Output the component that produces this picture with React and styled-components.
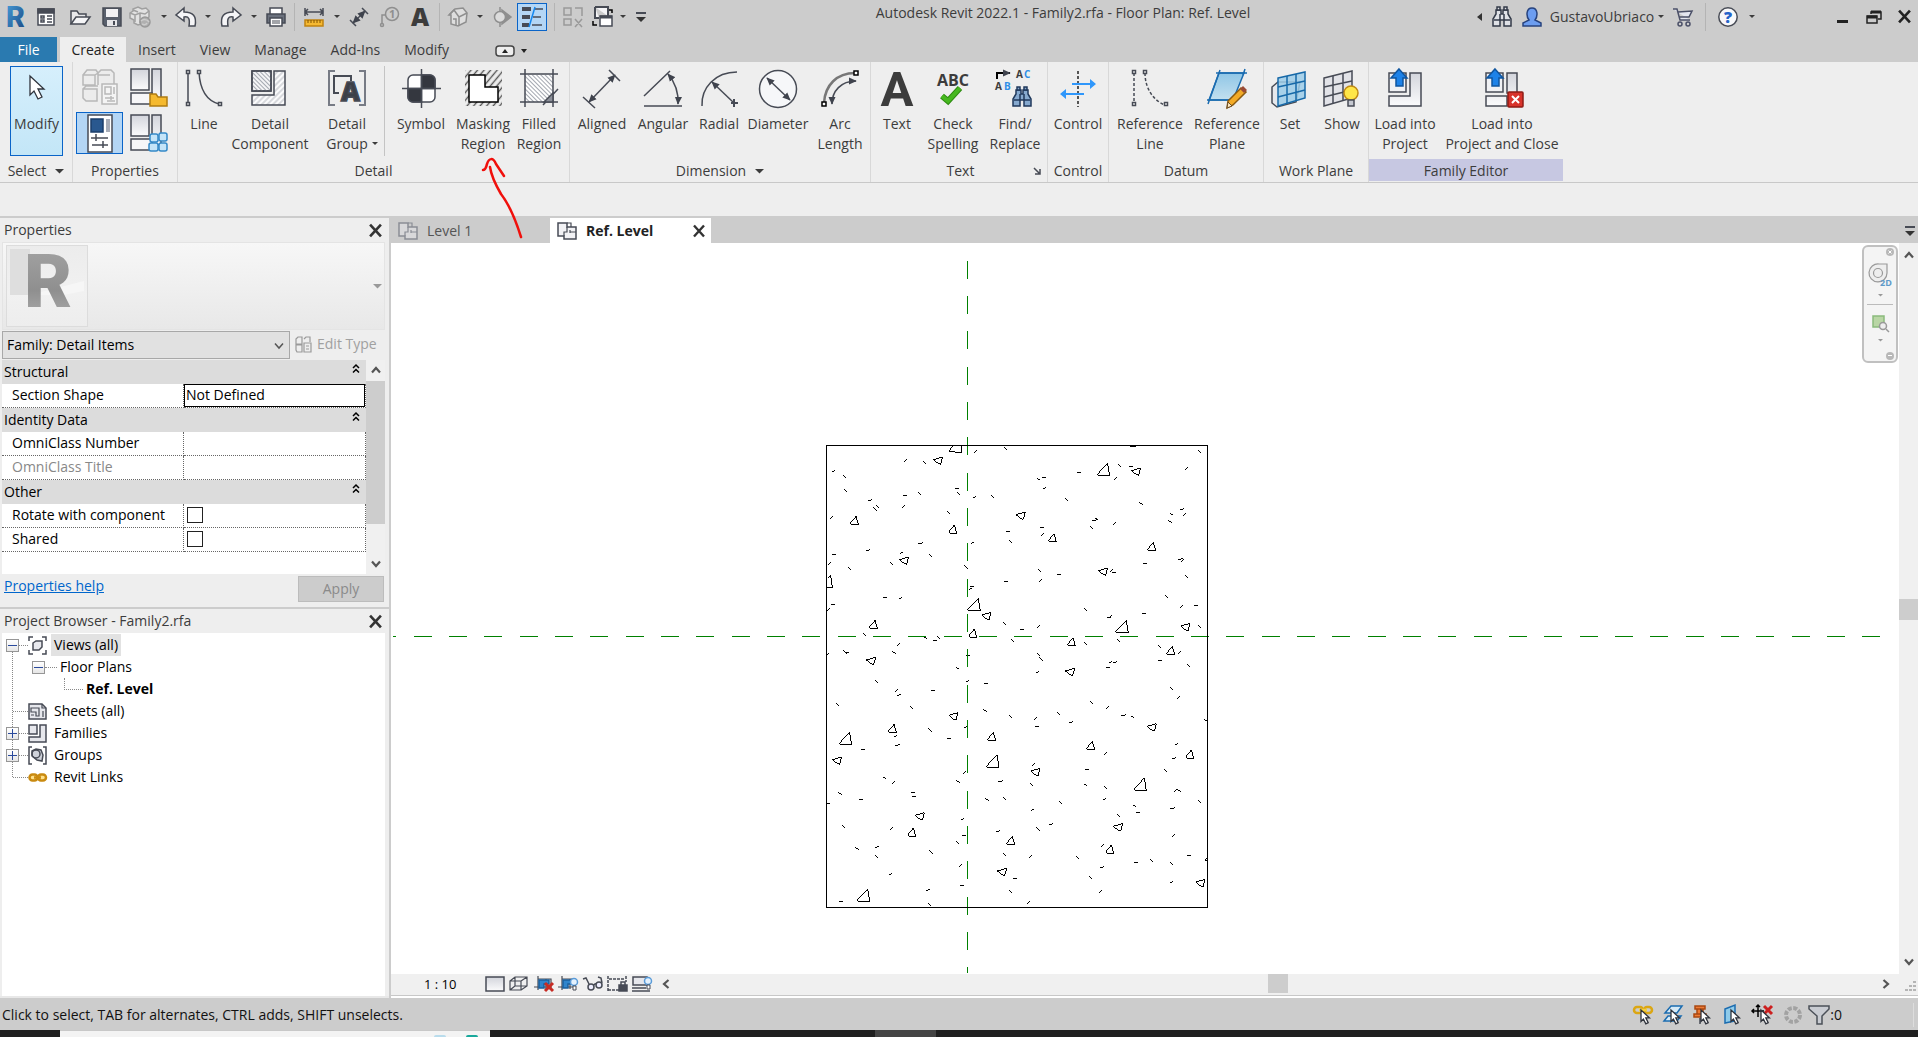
import React from 'react';
import styled, { createGlobalStyle } from 'styled-components';

const GlobalStyle = createGlobalStyle`
  * {
    box-sizing: border-box;
  }

  body {
    margin: 0;
    overflow: hidden;
    background: #eeeeee;
    color: #3c3c3c;
    font-family: 'Open Sans', 'Noto Sans', sans-serif;
    font-size: 14px;
    line-height: 20px;
  }

  button, input, select {
    font: inherit;
    color: inherit;
  }

  svg {
    display: block;
    flex: none;
    overflow: visible;
  }
`;

const Window = styled.div`
  position: relative;
  display: flex;
  flex-direction: column;
  height: 100vh;
`;

const PlainButton = styled.button`
  display: flex;
  align-items: center;
  justify-content: center;
  padding: 0;
  border: 0;
  background: transparent;
  white-space: nowrap;
`;

/* title bar */

const TitleBar = styled.header`
  display: flex;
  flex: none;
  height: 37px;
  padding-bottom: 4px;
  background: #cccccc;
`;

const QuickAccess = styled.div`
  display: flex;
  align-items: center;
`;

const QuickButton = styled(PlainButton)`
  width: ${(p) => p.$w}px;
  height: 28px;
`;

const QuickToggle = styled(PlainButton)`
  width: 30px;
  height: 28px;
  margin: 0 3px;
  border: 1px solid #0a64c8;
  background: #b4d6f5;
`;

const QuickDivider = styled.span`
  width: 1px;
  height: 28px;
  margin: 0 ${(p) => p.$gap}px;
  background: #b4b4b4;
`;

const Title = styled.h1`
  flex: 1;
  margin: 0;
  font-size: 14px;
  font-weight: 400;
  line-height: 26px;
  text-align: center;
`;

const UserName = styled(PlainButton)`
  gap: 4px;
  width: 120px;
`;

/* ribbon */

const TabBar = styled.nav`
  display: flex;
  flex: none;
  height: 25px;
  background: #cccccc;
`;

const Tab = styled(PlainButton)`
  padding: 0 12px;
  color: #3c3c3c;
`;

const FileTab = styled(PlainButton)`
  width: 57px;
  margin-right: 3px;
  background: #2a7ab0;
  color: #fff;
`;

const ActiveTab = styled(PlainButton)`
  width: 66px;
  background: #eeeeee;
  color: #222;
`;

const RibbonArea = styled.div`
  display: flex;
  flex: none;
  height: 121px;
  border-bottom: 1px solid #c8c8c8;
  background: #eeeeee;
`;

const PanelBox = styled.section`
  display: flex;
  flex-direction: column;
  padding-bottom: 1px;
  border-right: 1px solid ${(p) => (p.$last ? 'transparent' : '#d8d8d8')};
`;

const PanelBody = styled.div`
  display: flex;
  height: 97px;
  padding-top: 4px;
`;

const PanelTitle = styled.div`
  display: flex;
  align-items: center;
  justify-content: center;
  gap: 9px;
  height: 22px;
  padding-top: 2px;
  background: ${(p) => (p.$highlight ? '#c7c8e2' : 'transparent')};
`;

const Launcher = styled(PlainButton)`
  margin-right: -70px;
  margin-left: 50px;
`;

const ToolButton = styled(PlainButton)`
  flex-direction: column;
  justify-content: flex-start;
  gap: 6px;
  width: ${(p) => p.$w}px;
  height: 90px;
  padding-top: 2px;
`;

const ModifyButton = styled(ToolButton)`
  margin: 0 9px 0 10px;
  padding-top: 1px;
  border: 1px solid #0a64c8;
  background: linear-gradient(#d6effc, #c3e6f7);
`;

const ToolLabel = styled.span`
  position: relative;
  white-space: pre;
  text-align: center;
`;

const MenuMark = styled.span`
  position: absolute;
  right: -10px;
  bottom: 9px;
`;

const ToolDivider = styled.span`
  width: 1px;
  height: 90px;
  background: #c4c4c4;
`;

const SmallTools = styled.div`
  display: grid;
  grid-template-columns: 47px 47px;
  grid-template-rows: 42px 42px;
  gap: 4px 2px;
  padding: 0 5px 0 3px;
`;

const SmallTool = styled(PlainButton)`
  border: 1px solid ${(p) => (p.$on ? '#0a64c8' : 'transparent')};
  background: ${(p) => (p.$on ? '#b4d6f5' : 'transparent')};
`;

const OptionsBar = styled.div`
  flex: none;
  height: 35px;
  border-bottom: 2px solid #cccccc;
`;

/* side panels */

const Workspace = styled.div`
  display: flex;
  flex: 1;
  min-height: 0;
`;

const Sidebar = styled.aside`
  display: flex;
  flex: none;
  flex-direction: column;
  width: 391px;
  border-right: 2px solid #cccccc;
`;

const Palette = styled.section`
  padding: 0 4px 0 2px;
`;

const PaletteHeader = styled.header`
  display: flex;
  align-items: center;
  justify-content: space-between;
  height: 24px;
  padding: 0 3px 0 2px;
`;

const PaletteTitle = styled.h2`
  margin: 0;
  font-size: 14px;
  font-weight: 400;
`;

const TypePreview = styled.div`
  display: flex;
  align-items: center;
  justify-content: space-between;
  height: 88px;
  padding: 3px 2px;
  border: 1px solid #e4e4e4;
  background: linear-gradient(#f7f7f7, #e8e8e8);
`;

const Thumb = styled.div`
  width: 82px;
  height: 82px;
  margin-left: 1px;
  border: 1px solid #dcdcdc;
  background: linear-gradient(#ececec, #f1f1f1 60%, #ededed);
`;

const TypeRow = styled.div`
  display: flex;
  align-items: center;
  gap: 5px;
  height: 30px;
`;

const SelectWrap = styled.div`
  position: relative;
  width: 288px;
`;

const TypeSelect = styled.select`
  width: 100%;
  height: 28px;
  padding: 0 4px;
  border: 1px solid #a8a8a8;
  border-radius: 0;
  appearance: none;
  background: #e1e1e1;
  color: #000;
`;

const SelectMark = styled.span`
  position: absolute;
  top: 10px;
  right: 6px;
  pointer-events: none;
`;

const EditType = styled(PlainButton)`
  gap: 5px;
  height: 28px;
  padding-bottom: 2px;
  color: #a0a0a0;
`;

const GridArea = styled.div`
  display: flex;
  height: 214px;
  background: #fff;
`;

const PropertyTable = styled.table`
  flex: 1;
  height: 192px;
  border-spacing: 0;
  table-layout: fixed;
  color: #000;
`;

const GroupHead = styled.th`
  height: 24px;
  padding: 0 6px 0 2px;
  background: #dcdcdc;
  font-weight: 400;
  text-align: left;
`;

const GroupHeadInner = styled.div`
  display: flex;
  align-items: center;
  justify-content: space-between;
  height: 24px;
`;

const NameCell = styled.td`
  width: 50%;
  height: 24px;
  padding: 0 0 2px 10px;
  border-right: 1px dotted #666;
  border-bottom: 1px dotted #666;
  color: ${(p) => (p.$muted ? '#888' : '#000')};
  line-height: 20px;
`;

const ValueCell = styled.td`
  padding: 0 0 ${(p) => (p.$check ? '2px 3px' : '0 0')};
  border-right: 1px dotted #666;
  border-bottom: 1px dotted #666;
`;

const ValueInput = styled.input`
  display: block;
  width: 100%;
  height: 23px;
  padding: 0 1px 2px;
  border: 1px solid ${(p) => (p.$focused ? '#000' : 'transparent')};
  background: transparent;
`;

const Check = styled.input`
  display: block;
  width: 16px;
  height: 16px;
  margin: 0;
  border: 1px solid #222;
  appearance: none;
  background: #fff;
`;

const ScrollBar = styled.div`
  display: flex;
  flex: none;
  flex-direction: column;
  align-items: center;
  width: 19px;
  padding: ${(p) => p.$pad}px 0;
  background: #f0f0f0;
`;

const ScrollTrack = styled.div`
  display: flex;
  flex: 1;
  flex-direction: column;
  width: 100%;
`;

const ScrollThumb = styled.div`
  flex: ${(p) => p.$size};
  background: #cdcdcd;
`;

const ScrollSpace = styled.div`
  flex: ${(p) => p.$size};
`;

const PaletteFooter = styled.footer`
  display: flex;
  justify-content: space-between;
  height: 33px;
  padding: 2px 0 5px 2px;
`;

const HelpLink = styled.a`
  color: #0066cc;
`;

const ApplyButton = styled.button`
  width: 86px;
  height: 26px;
  margin-right: 1px;
  padding: 0;
  border: 1px solid #bcbcbc;
  background: #cccccc;
  color: #8a8a8a;
`;

const Browser = styled(Palette)`
  display: flex;
  flex: 1;
  flex-direction: column;
  border-top: 2px solid #cccccc;
  border-bottom: 2px solid #e8e8e8;
`;

const Tree = styled.ul`
  position: relative;
  flex: 1;
  margin: 0;
  padding: 1px 0 0 4px;
  background: #fff;
  color: #000;
  list-style: none;

  &::before {
    content: '';
    position: absolute;
    top: 18px;
    left: 10px;
    height: 126px;
    border-left: 1px dotted #888;
  }
`;

const TreeRow = styled.li`
  position: relative;
  display: flex;
  align-items: center;
  height: 22px;
  padding-left: ${(p) => p.$indent}px;
`;

const Expander = styled.button`
  display: flex;
  align-items: center;
  justify-content: center;
  width: 13px;
  height: 13px;
  padding: 0;
  border: 1px solid #969696;
  background: linear-gradient(#fff, #e6e6e6);
`;

const Connector = styled.span`
  width: ${(p) => p.$w}px;
  border-top: 1px dotted #888;
`;

const CornerConnector = styled.span`
  align-self: flex-start;
  width: 19px;
  height: 12px;
  border-bottom: 1px dotted #888;
  border-left: 1px dotted #888;
`;

const TreeLabel = styled.span`
  margin-left: ${(p) => (p.$near ? 0 : 4)}px;
  padding: 0 3px;
  line-height: 22px;
  background: ${(p) => (p.$selected ? '#e2e2e2' : 'transparent')};
  font-weight: ${(p) => (p.$bold ? 700 : 400)};
`;

/* drawing area */

const ViewArea = styled.main`
  display: flex;
  flex: 1;
  flex-direction: column;
  min-width: 0;
  border-bottom: 2px solid #fff;
`;

const ViewTabs = styled.div`
  display: flex;
  align-items: stretch;
  flex: none;
  height: 25px;
  background: #cccccc;
`;

const ViewTab = styled.div`
  display: flex;
  align-items: center;
  gap: 9px;
  width: ${(p) => (p.$active ? 161 : 159)}px;
  padding: 0 6px 0 7px;
  background: ${(p) => (p.$active ? '#fff' : 'transparent')};
  color: ${(p) => (p.$active ? '#222' : '#555')};
  font-weight: ${(p) => (p.$active ? 700 : 400)};

  button {
    margin-left: auto;
  }
`;

const TabMenu = styled(PlainButton)`
  margin-right: 2px;
  margin-left: auto;
`;

const CanvasRow = styled.div`
  display: flex;
  flex: 1;
  min-height: 0;
`;

const Canvas = styled.div`
  position: relative;
  flex: 1;
  overflow: hidden;
  background: #fff;

  > svg {
    width: 100%;
    height: 100%;
  }
`;

const NavBar = styled.div`
  position: absolute;
  top: 2px;
  right: 1px;
  display: flex;
  flex-direction: column;
  align-items: center;
  width: 36px;
  height: 118px;
  padding: 1px 2px;
  border: 2px solid #c0c0c0;
  border-radius: 6px;
  background: #f4f4f4;
`;

const NavEdge = styled(PlainButton)`
  align-self: flex-end;
`;

const NavTool = styled(PlainButton)`
  flex: 1;
  flex-direction: column;
  gap: 7px;
`;

const NavLine = styled.span`
  width: 26px;
  height: 1px;
  background: #bbb;
`;

const ViewBar = styled.div`
  display: flex;
  align-items: center;
  flex: none;
  height: 22px;
  padding: 0 0 2px 33px;
  border-bottom: 1px solid #c8c8c8;
  background: #f0f0f0;
  color: #000;
`;

const ScaleButton = styled(PlainButton)`
  width: 59px;
  justify-content: flex-start;
  font-size: 13px;
`;

const ViewTool = styled(PlainButton)`
  width: 24px;
  margin-right: ${(p) => (p.$gap ? 1 : 0)}px;
`;

const HTrack = styled.div`
  display: flex;
  flex: 1;
  align-self: stretch;
`;

const Grip = styled.span`
  align-self: flex-end;
  margin: 0 2px 1px 13px;
`;

/* bottom bars */

const StatusBar = styled.footer`
  display: flex;
  align-items: center;
  justify-content: space-between;
  flex: none;
  height: 32px;
  padding: 2px 0 0 2px;
  background: #cccccc;
  color: #111;
`;

const StatusTools = styled.div`
  display: flex;
  align-items: center;
  margin-right: 4px;
  padding-right: 71px;
  border-right: 1px solid #ddd;
`;

const StatusTool = styled(PlainButton)`
  width: 30px;
  height: 24px;
`;

const TaskBar = styled.div`
  display: flex;
  flex: none;
  height: 7px;
  background: #1f1f1f;
`;

const TaskSearch = styled.div`
  display: flex;
  gap: 20px;
  width: 430px;
  margin-left: 60px;
  padding: 4px 12px 0 0;
  justify-content: flex-end;
  border-top: 1px solid #c8c8c8;
  background: #f3f3f3;
`;

const TaskDot = styled.span`
  width: 12px;
  height: 2px;
  border-radius: 6px 6px 0 0;
  background: ${(p) => p.$color};
`;

const TaskActive = styled.div`
  width: 61px;
  margin-left: 385px;
  background: #444;
`;

const Markup = styled.svg`
  position: absolute;
  top: 156px;
  left: 480px;
  pointer-events: none;
`;

const INK = '#474b55';

/* small shared glyphs */

const Icon = ({ w = 40, h = w, box, children, ...rest }) => (
  <svg width={w} height={h} viewBox={box || `0 0 ${w} ${h}`} fill="none" stroke={INK} strokeWidth="1.5" aria-hidden="true" {...rest}>
    {children}
  </svg>
);

const Down = ({ w = 8, color = '#3c3c3c' }) => (
  <Icon w={w} h={w / 2} box="0 0 8 4" stroke="none">
    <path d="M0 0h8l-4 4z" fill={color} />
  </Icon>
);

const Cross = ({ size = 12, color = '#333', weight = 2.4 }) => (
  <Icon w={size} box="0 0 12 12" stroke={color} strokeWidth={weight}>
    <path d="M1 0.500 11 11.500M11 0.500 1 11.500" />
  </Icon>
);

const Chevron = ({ dir, size = 10, color = '#555', weight = 2.2 }) => {
  const paths = {
    up: 'M1 7.500 5 3l4 4.500',
    down: 'M1 2.500 5 7l4-4.500',
    left: 'M7.500 1 3 5l4.500 4',
    right: 'M2.500 1 7 5l-4.500 4',
  };
  return (
    <Icon w={size} box="0 0 10 10" stroke={color} strokeWidth={weight}>
      <path d={paths[dir]} />
    </Icon>
  );
};

const SharedDefs = () => (
  <svg width="0" height="0" style={{ position: 'absolute' }} aria-hidden="true">
    <defs>
      <marker id="arrow" viewBox="0 0 10 10" refX="9" refY="5" markerWidth="8" markerHeight="8" markerUnits="userSpaceOnUse" orient="auto-start-reverse">
        <path d="M0 0.500 10 5 0 9.500z" fill="#3f434d" />
      </marker>
      <pattern id="hatch" width="3" height="3" patternUnits="userSpaceOnUse" patternTransform="rotate(-45)">
        <path d="M1.500 0v3" stroke="#a3a7b0" strokeWidth="1" />
      </pattern>
      <pattern id="hatchBack" width="4" height="4" patternUnits="userSpaceOnUse" patternTransform="rotate(45)">
        <path d="M2 0v4" stroke="#b3b6bd" strokeWidth="1" />
      </pattern>
      <pattern id="hatchWide" width="5" height="5" patternUnits="userSpaceOnUse" patternTransform="rotate(40)">
        <path d="M2.500 0v5" stroke="#555" strokeWidth="1.400" />
      </pattern>
      <linearGradient id="steel" x1="0" y1="0" x2="0" y2="1">
        <stop offset="0" stopColor="#d3d5dc" />
        <stop offset="1" stopColor="#fbfbfc" />
      </linearGradient>
      <linearGradient id="sky" x1="0" y1="0" x2="0" y2="1">
        <stop offset="0" stopColor="#8fc6e6" />
        <stop offset="1" stopColor="#c3e0ef" />
      </linearGradient>
      <linearGradient id="logo" x1="0" y1="0" x2="1" y2="1">
        <stop offset="0" stopColor="#49a0dc" />
        <stop offset="1" stopColor="#17447f" />
      </linearGradient>
      <linearGradient id="grayLogo" x1="0" y1="0" x2="0" y2="1">
        <stop offset="0" stopColor="#a6a6a6" />
        <stop offset="0.600" stopColor="#8f8f8f" />
        <stop offset="1" stopColor="#b0b0b0" />
      </linearGradient>
    </defs>
  </svg>
);

const Pointer = ({ x = 0, y = 0, scale = 1 }) => (
  <path
    transform={`translate(${x} ${y}) scale(${scale})`}
    d="M0 0v19l4-4 4 8 4-2-4-8h6z"
    fill="#fff"
    stroke="#2f333c"
    strokeWidth={1.3 / scale}
  />
);

const Binoculars = ({ fill = '#dfe1e6', stroke = '#333a48' }) => (
  <g fill={fill} stroke={stroke} strokeWidth="1.500">
    <path d="M4 4h5v4h2V4h5v4l3 5v7h-7v-6h-4v6H1v-7l3-5z" />
    <path d="M5 1h3v3H5zM12 1h3v3h-3zM2 14h6M12 14h6M8 8v6M12 8v6" />
  </g>
);

/* quick access icons, 22px */

const Quick = ({ children, ...rest }) => <Icon w={22} {...rest}>{children}</Icon>;

const QuickIcons = {
  logo: (
    <Icon w={22} h={26} stroke="none">
      <text x="1" y="23" fontFamily="Roboto" fontSize="29" fontWeight="900" fill="url(#logo)">R</text>
    </Icon>
  ),
  home: (
    <Quick>
      <path d="M3 3h16v16H3z" fill="#fff" />
      <path d="M3 3h16v4H3z" fill={INK} />
      <path d="M6 10h3v2H6zM6 14h3v2H6zM12 10h5M12 13h5M12 16h5" />
    </Quick>
  ),
  open: (
    <Quick>
      <path d="M2 18V5h6l2 3h7v3" fill="#e8e8ea" />
      <path d="M2 18 7 11h14l-5 7z" fill="#f5f5f7" />
    </Quick>
  ),
  save: (
    <Quick>
      <path d="M2 2h18v18H4l-2-2z" fill="#59606d" />
      <path d="M5 3h12v8H5z" fill="#f2f2f5" stroke="none" />
      <path d="M6 14h10v6H6z" fill="#e5e5e8" stroke="none" />
      <path d="M12 15h2v4h-2z" fill={INK} stroke="none" />
    </Quick>
  ),
  sync: (
    <Quick stroke="#a0a0a0">
      <path d="m1 7 3-2V3l5-2 4 2 4-1 3 3v6l-8 7-3 1-4-2v-3l-4-2z" fill="#e2e2e2" />
      <path d="m1 7 5 2 5-2 5 1 4-3M6 9v7M11 7v10M4 4l5 2" />
      <circle cx="16" cy="16" r="5" fill="#b0b0b0" stroke="#999" />
      <path d="M12 15c2-2 6-2 8 1M13 18c2 1 4 1 5-1" stroke="#ccc" />
    </Quick>
  ),
  undo: (
    <Quick>
      <path d="M9 2 1 9l8 6v-4c5-1 6 2 5 9h6C22 10 18 6 9 6z" fill="#f5f5f7" />
    </Quick>
  ),
  redo: (
    <Quick>
      <path d="m13 2 8 7-8 6v-4c-5-1-6 2-5 9H2C0 10 4 6 13 6z" fill="#f5f5f7" />
    </Quick>
  ),
  print: (
    <Quick>
      <path d="M5 8V2h12v6" fill="#fff" />
      <path d="M2 8h18v9H2z" fill="#6b717d" />
      <path d="M5 12h12v8H5z" fill="#fff" />
      <path d="M7 15h8M7 17h8" strokeWidth="1" />
    </Quick>
  ),
  measure: (
    <Quick>
      <path d="M2 6h18M5 3 2 6l3 3M17 3l3 3-3 3M2 2v8M20 2v8" />
      <path d="M2 14h18v6H2z" fill="#f6b932" stroke="#c08310" />
      <path d="M5 14v3M8 14v3M11 14v3M14 14v3M17 14v3" stroke="#805500" strokeWidth="1" />
    </Quick>
  ),
  dimension: (
    <Quick>
      <path d="M5 17 17 5" markerStart="url(#arrow)" markerEnd="url(#arrow)" />
      <path d="m2 14 6 6M14 2l6 6" />
    </Quick>
  ),
  tag: (
    <Quick stroke="#8f8f8f">
      <circle cx="14" cy="8" r="6.500" />
      <path d="M8 9H4v8" />
      <circle cx="4" cy="19" r="1.500" />
      <text x="11" y="12" fontFamily="Open Sans" fontSize="11" fontWeight="700" fill="#8f8f8f" stroke="none">1</text>
    </Quick>
  ),
  text: (
    <Quick stroke="none">
      <text x="3" y="20" fontFamily="Open Sans" fontSize="25" fontWeight="800" fill="#3c3c3c">A</text>
    </Quick>
  ),
  house: (
    <Quick stroke="#8f8f8f">
      <path d="m2 9 6-6 8-1 4 5-1 9-8 4-7-2V9z" fill="#dedede" />
      <path d="m2 9 5-5 5 7 8-4M12 11v9M6 13h3v6" />
    </Quick>
  ),
  section: (
    <Quick stroke="#8f8f8f">
      <path d="m11 4 9 7-9 7z" fill="#8f8f8f" />
      <circle cx="9" cy="11" r="5.500" fill="#dcdcdc" />
      <path d="M9 1v4M9 17v4" />
    </Quick>
  ),
  thin: (
    <Quick w={24} h={22}>
      <path d="M2 3h9M2 11h8M2 19h7" strokeWidth="4" />
      <path d="M14 3h9M13 11h8M12 19h10" strokeWidth="1.500" />
      <path d="m15 1-6 20" stroke="#1287f0" />
    </Quick>
  ),
  closeHidden: (
    <Quick stroke="#999">
      <path d="M2 2h7v7H2zM13 2h7v8M2 13h7v6H2zM13 13l7 8M20 13l-7 8" />
    </Quick>
  ),
  switchWin: (
    <Quick>
      <path d="M3 1h13v9M3 1v11h4" fill="#f5f5f7" strokeWidth="2" />
      <path d="M8 10h12v10H8z" fill="#fff" />
      <path d="M8 11h12" strokeWidth="3" />
      <path d="M17 4h3v3M1 15v4h4" stroke="#000" />
    </Quick>
  ),
  customize: (
    <Icon w={12} h={12}>
      <path d="M1 2h10" strokeWidth="2" />
      <path d="M1 6h10l-5 5z" fill="#333" stroke="none" />
    </Icon>
  ),
};

/* ribbon icons, 40px */

const ELL = 'M24 3h11v34H2V27h22z';

const Pane = () => (
  <>
    <path d="M2 2h18v21H2z" fill="url(#steel)" />
    <path d="M23 2h9v30h-9z" fill="url(#steel)" />
    <path d="M2 26h21v11H2z" fill="#f6f6f8" />
  </>
);

const RibbonIcons = {
  typeProps: (
    <Icon stroke="#b8b8b8">
      <path d="m3 8 4-5h9l2 3 3-3h10l3 3v12h-3M3 8h12v10H3zM18 6v12M15 8l3-2M18 8h12M3 22h14v12H6l-3-3zM3 22l3-3h12" fill="#ececec" />
      <path d="M22 17h15v20H22z" fill="#f4f4f4" />
      <path d="M25 20h6v7h-6zM34 20v7M25 31h9M27 34h8M31 29v4" />
    </Icon>
  ),
  familyCategory: (
    <Icon>
      <Pane />
      <path d="M21 27h6l2 3h9v9H21z" fill="#f5b92e" stroke="#b07c12" />
    </Icon>
  ),
  properties: (
    <Icon>
      <path d="M8 2h24v37H8z" fill="#fff" />
      <path d="M11 6h12v13H11z" fill="#29588f" stroke="#1b3e6b" />
      <path d="M26 6h4v13h-4z" fill="#a8adb8" stroke="none" />
      <path d="M11 25h17M16 21v7M12 32h16M23 28v7" />
    </Icon>
  ),
  familyTypes: (
    <Icon>
      <Pane />
      <g fill="#c4e4f8" stroke="#3489c8">
        <rect x="21" y="21" width="8" height="8" rx="2" />
        <rect x="30" y="20" width="8" height="8" rx="2" />
        <rect x="20" y="30" width="9" height="8" rx="2" />
        <rect x="30" y="30" width="8" height="8" rx="2" />
      </g>
    </Icon>
  ),
  line: (
    <Icon>
      <path d="M4 4v32M15 4c1 19 9 29 20 32" />
      <path d="M2.500 2.500h3v3h-3zM2.500 34.500h3v3h-3zM13.500 2.500h3v3h-3zM34.500 34.500h3v3h-3z" fill="#eee" />
    </Icon>
  ),
  component: (
    <Icon>
      <path d={ELL} fill="#fbfbfc" stroke="none" />
      <path d="M2 3h19v20H2z" fill="#f4f4f6" />
      <path d="M2 3h19v20H2z" fill="url(#hatch)" />
      <path d={ELL} fill="url(#hatchBack)" />
    </Icon>
  ),
  group: (
    <Icon>
      <path d="M8 3H2v34h6M32 3h6v34h-6" stroke="#777b85" strokeWidth="2" />
      <path d="M12 25H7V8h17v5" strokeWidth="2" />
      <text x="14" y="33" fontFamily="Open Sans" fontSize="26" fontWeight="800" fill="#3c3f47">A</text>
    </Icon>
  ),
  symbol: (
    <Icon>
      <rect x="7" y="7" width="27" height="27" rx="5" fill="#fff" />
      <path d="M20.500 7H29a5 5 0 0 1 5 5v8.500H20.500zM20.500 34H12a5 5 0 0 1-5-5v-8.500h13.500z" fill="#34373f" />
      <path d="M20.500 1v39M1 20.500h39" />
    </Icon>
  ),
  masking: (
    <Icon>
      <path d="M2 2h37v36H2z" fill="url(#hatchWide)" stroke="none" />
      <path d="M6 7h16v12h13v15H6z" fill="#fff" stroke="#000" />
    </Icon>
  ),
  filled: (
    <Icon>
      <path d="M6 7h28v27H6z" fill="#fff" stroke="none" />
      <path d="M6 7h28v27H6z" fill="url(#hatch)" stroke="none" />
      <path d="M1 6h38M1 34h38M6 1v38M34 1v38M24 37l15-16" />
      <path d="M34 25v9h-9z" fill="#8b8f99" />
    </Icon>
  ),
  aligned: (
    <Icon>
      <path d="M7 34 33 7" markerStart="url(#arrow)" markerEnd="url(#arrow)" />
      <path d="m1 29 12 11M27 2l11 11" />
    </Icon>
  ),
  angular: (
    <Icon>
      <path d="M1 28 27 3M1 38h38" />
      <path d="M25 6q11 13 10 30" markerStart="url(#arrow)" markerEnd="url(#arrow)" />
    </Icon>
  ),
  radial: (
    <Icon>
      <path d="M3 38C2 20 16 4 38 4" />
      <path d="M35 35 13 14" markerEnd="url(#arrow)" />
      <path d="M35 31v8M32 35h7" strokeWidth="2" />
    </Icon>
  ),
  diameter: (
    <Icon>
      <circle cx="20" cy="21" r="18.500" fill="#f6f7f9" />
      <path d="M9 10 32 32" markerStart="url(#arrow)" markerEnd="url(#arrow)" />
    </Icon>
  ),
  arc: (
    <Icon>
      <path d="M4 35C5 17 17 5 35 5" stroke="#777" strokeWidth="2.500" />
      <path d="M12 36c0-13 9-23 24-23" markerStart="url(#arrow)" markerEnd="url(#arrow)" />
      <path d="M2 34h4v4H2zM34 3h4v4h-4z" fill="#fff" stroke="#000" />
    </Icon>
  ),
  text: (
    <Icon stroke="none">
      <text x="20" y="38" textAnchor="middle" fontFamily="Roboto" fontSize="49" fontWeight="700" fill="#3c3c3c">A</text>
    </Icon>
  ),
  spelling: (
    <Icon stroke="none">
      <text x="20" y="18" textAnchor="middle" fontFamily="Open Sans" fontSize="16" fontWeight="700" fill="#3c3c3c">ABC</text>
      <path d="m9 28 6 5 12-13" stroke="#2e8b12" strokeWidth="6" />
      <path d="m9 28 6 5 12-13" stroke="#46b81f" strokeWidth="4" />
    </Icon>
  ),
  find: (
    <Icon>
      <path d="M2 11V5h13" stroke="#000" strokeWidth="2" markerEnd="url(#arrow)" />
      <g fontFamily="Open Sans" fontSize="10" fontWeight="700" stroke="none">
        <text x="21" y="10" fill="#3c3c3c">A</text>
        <text x="29" y="10" fill="#2f8fe8">C</text>
        <text x="0" y="22" fill="#3c3c3c">A</text>
        <text x="9" y="22" fill="#2f8fe8">B</text>
      </g>
      <g transform="translate(17 18)">
        <Binoculars fill="#86a9cf" stroke="#20395c" />
      </g>
    </Icon>
  ),
  control: (
    <Icon>
      <path d="M20 3v36" stroke="#222" strokeDasharray="3 2" />
      <path d="M14 16h18M26 26H8" stroke="#2f97fb" strokeWidth="2" />
      <path d="M32 11v10l6-5zM8 21v10l-6-5z" fill="#2f97fb" stroke="none" />
    </Icon>
  ),
  refLine: (
    <Icon>
      <path d="M4 5v32M15 5c0 16 9 28 20 32" strokeDasharray="3 2" />
      <path d="M2.500 2.500h3v3h-3zM2.500 34.500h3v3h-3zM13.500 2.500h3v3h-3zM34.500 34.500h3v3h-3z" fill="#fff" />
    </Icon>
  ),
  refPlane: (
    <Icon>
      <path d="M12 5h25L26 32H2z" fill="url(#sky)" stroke="#1b6cb0" />
      <path d="M9 5h31M13 2 1 36M38 1l-2 6M0 32h27" stroke="#1b6cb0" />
      <path d="m21 33 13-13 5 4-13 13-6 3z" fill="#f2aa26" stroke="#8a5a12" />
      <path d="m33 21 3-3 4 4-3 3z" fill="#9a4a36" stroke="none" />
      <path d="m21 34-1 6 5-2z" fill="#ffe9c0" stroke="#6a4a20" strokeWidth="1" />
    </Icon>
  ),
  setPlane: (
    <Icon>
      <path d="m2 19 6-5h22l-4 20-19 5-5-4z" fill="#e6e8ec" />
      <path d="m8 10 27-6v26L8 38z" fill="#9ccde9" fillOpacity="0.850" stroke="#1769a8" />
      <path d="m17 8v27M26 6v27M8 19l27-6M8 29l27-7" stroke="#1769a8" />
    </Icon>
  ),
  showPlane: (
    <Icon>
      <path d="m2 10 28-7v27L2 38z" fill="#e2e3e8" />
      <path d="m11 8v27M21 5v28M2 19l28-6M2 29l28-7" />
      <circle cx="29" cy="25" r="7" fill="#ffe648" stroke="#c08a14" />
      <path d="M26 32h6v6h-6z" fill="#c5c8d0" />
    </Icon>
  ),
  load: (
    <Icon>
      <path d="M25 5h11v33H4V28h21z" fill="url(#steel)" />
      <path d="M4 5h17v19H4z" fill="#f0f1f4" />
      <path d="m14 1 8 9h-4v8h-7v-8H6z" fill="#1d82e8" stroke="#0f559f" />
    </Icon>
  ),
  loadClose: (
    <Icon>
      <path d="M25 5h10v20H25zM4 28h21v10H4z" fill="url(#steel)" />
      <path d="M4 5h17v19H4z" fill="#f0f1f4" />
      <path d="m13 1 8 9h-4v8h-7v-8H5z" fill="#1d82e8" stroke="#0f559f" />
      <rect x="26" y="24" width="15" height="15" rx="1" fill="#d8332b" stroke="#8e1c16" />
      <path d="m30 28 7 7M37 28l-7 7" stroke="#fff" strokeWidth="2" />
    </Icon>
  ),
};

const Tool = ({ icon, label, w, menu }) => (
  <ToolButton $w={w}>
    {RibbonIcons[icon]}
    <ToolLabel>
      {label}
      {menu && <MenuMark><Down w={6} /></MenuMark>}
    </ToolLabel>
  </ToolButton>
);

const Panel = ({ title, highlight, last, extra, children }) => (
  <PanelBox $last={last}>
    <PanelBody>{children}</PanelBody>
    <PanelTitle $highlight={highlight}>{title}{extra}</PanelTitle>
  </PanelBox>
);

const Ribbon = () => (
  <RibbonArea>
    <Panel title="Select" extra={<Down w={9} />}>
      <ModifyButton $w={53}>
        <Icon><Pointer x={13} y={8} /></Icon>
        <ToolLabel>Modify</ToolLabel>
      </ModifyButton>
    </Panel>
    <Panel title="Properties">
      <SmallTools>
        <SmallTool aria-label="Type properties">{RibbonIcons.typeProps}</SmallTool>
        <SmallTool aria-label="Family category">{RibbonIcons.familyCategory}</SmallTool>
        <SmallTool $on aria-label="Properties">{RibbonIcons.properties}</SmallTool>
        <SmallTool aria-label="Family types">{RibbonIcons.familyTypes}</SmallTool>
      </SmallTools>
    </Panel>
    <Panel title="Detail">
      <Tool icon="line" label="Line" w={52} />
      <Tool icon="component" label={'Detail\nComponent'} w={80} />
      <Tool icon="group" label={'Detail\nGroup'} w={74} menu />
      <ToolDivider />
      <Tool icon="symbol" label="Symbol" w={72} />
      <Tool icon="masking" label={'Masking\nRegion'} w={52} />
      <Tool icon="filled" label={'Filled\nRegion'} w={60} />
    </Panel>
    <Panel title="Dimension" extra={<Down w={9} />}>
      <Tool icon="aligned" label="Aligned" w={64} />
      <Tool icon="angular" label="Angular" w={58} />
      <Tool icon="radial" label="Radial" w={54} />
      <Tool icon="diameter" label="Diameter" w={64} />
      <Tool icon="arc" label={'Arc\nLength'} w={60} />
    </Panel>
    <Panel
      title="Text"
      extra={(
        <Launcher aria-label="Text types">
          <Icon w={8}><path d="m1 1 6 6M7 2v5H2" /></Icon>
        </Launcher>
      )}
    >
      <Tool icon="text" label="Text" w={52} />
      <Tool icon="spelling" label={'Check\nSpelling'} w={60} />
      <Tool icon="find" label={'Find/\nReplace'} w={64} />
    </Panel>
    <Panel title="Control">
      <Tool icon="control" label="Control" w={60} />
    </Panel>
    <Panel title="Datum">
      <Tool icon="refLine" label={'Reference\nLine'} w={82} />
      <Tool icon="refPlane" label={'Reference\nPlane'} w={72} />
    </Panel>
    <Panel title="Work Plane">
      <Tool icon="setPlane" label="Set" w={52} />
      <Tool icon="showPlane" label="Show" w={52} />
    </Panel>
    <Panel title="Family Editor" highlight last>
      <Tool icon="load" label={'Load into\nProject'} w={72} />
      <Tool icon="loadClose" label={'Load into\nProject and Close'} w={122} />
    </Panel>
  </RibbonArea>
);

const Header = () => (
  <TitleBar>
    <QuickAccess>
      <QuickButton $w={32} aria-label="Application menu">{QuickIcons.logo}</QuickButton>
      <QuickButton $w={28} aria-label="Home">{QuickIcons.home}</QuickButton>
      <QuickButton $w={40} aria-label="Open">{QuickIcons.open}</QuickButton>
      <QuickButton $w={24} aria-label="Save">{QuickIcons.save}</QuickButton>
      <QuickButton $w={32} aria-label="Synchronize">{QuickIcons.sync}</QuickButton>
      <QuickButton $w={16} aria-label="Synchronize options"><Down w={6} /></QuickButton>
      <QuickButton $w={28} aria-label="Undo">{QuickIcons.undo}</QuickButton>
      <QuickButton $w={16} aria-label="Undo list"><Down w={6} /></QuickButton>
      <QuickButton $w={30} aria-label="Redo">{QuickIcons.redo}</QuickButton>
      <QuickButton $w={16} aria-label="Redo list"><Down w={6} /></QuickButton>
      <QuickButton $w={28} aria-label="Print">{QuickIcons.print}</QuickButton>
      <QuickDivider $gap={4} />
      <QuickButton $w={30} aria-label="Measure">{QuickIcons.measure}</QuickButton>
      <QuickButton $w={16} aria-label="Measure options"><Down w={6} /></QuickButton>
      <QuickButton $w={28} aria-label="Aligned dimension">{QuickIcons.dimension}</QuickButton>
      <QuickButton $w={32} aria-label="Tag">{QuickIcons.tag}</QuickButton>
      <QuickButton $w={28} aria-label="Text">{QuickIcons.text}</QuickButton>
      <QuickDivider $gap={6} />
      <QuickButton $w={24} aria-label="Default 3D view">{QuickIcons.house}</QuickButton>
      <QuickButton $w={20} aria-label="3D view options"><Down w={6} /></QuickButton>
      <QuickButton $w={24} aria-label="Section">{QuickIcons.section}</QuickButton>
      <QuickToggle aria-label="Thin lines">{QuickIcons.thin}</QuickToggle>
      <QuickDivider $gap={4} />
      <QuickButton $w={28} aria-label="Close inactive views">{QuickIcons.closeHidden}</QuickButton>
      <QuickButton $w={32} aria-label="Switch windows">{QuickIcons.switchWin}</QuickButton>
      <QuickButton $w={8} aria-label="Window list"><Down w={6} /></QuickButton>
      <QuickButton $w={28} aria-label="Customize">{QuickIcons.customize}</QuickButton>
    </QuickAccess>
    <Title>Autodesk Revit 2022.1 - Family2.rfa - Floor Plan: Ref. Level</Title>
    <QuickAccess>
      <QuickButton $w={16} aria-label="Collapse">
        <Icon w={5} h={8}><path d="M5 0v8L0 4z" fill="#333" stroke="none" /></Icon>
      </QuickButton>
      <QuickButton $w={30} aria-label="Search">
        <Icon w={20} h={22}><Binoculars /></Icon>
      </QuickButton>
      <QuickButton $w={30} aria-label="Account">
        <Icon w={20} h={20} stroke="#27437e">
          <path d="M1 19v-3l6-3c-3-4-3-12 3-12s6 8 3 12l6 3v3z" fill="#6c9df0" />
        </Icon>
      </QuickButton>
      <UserName>GustavoUbriaco<Down w={6} /></UserName>
      <QuickButton $w={32} aria-label="App store">
        <Icon w={20} h={20} stroke="#4b5068">
          <path d="M0 2h4l3 11h10M5 5l14-1-3 6H6" fill="#e4e6f0" />
          <circle cx="7" cy="17" r="2" />
          <circle cx="15" cy="17" r="2" />
        </Icon>
      </QuickButton>
      <QuickDivider $gap={6} />
      <QuickButton $w={32} aria-label="Help">
        <Icon w={20}>
          <circle cx="10" cy="10" r="9.200" fill="#f8f8fa" />
          <text x="10" y="16" textAnchor="middle" fontFamily="Open Sans" fontSize="16" fontWeight="800" fill="#2563c9" stroke="none">?</text>
        </Icon>
      </QuickButton>
      <QuickButton $w={16} aria-label="Help menu"><Down w={6} /></QuickButton>
      <QuickButton $w={66} aria-label="More" />
      <QuickButton $w={32} aria-label="Minimize">
        <Icon w={11} h={12} stroke="#222" strokeWidth="3"><path d="M0 10.500h11" /></Icon>
      </QuickButton>
      <QuickButton $w={32} aria-label="Restore">
        <Icon w={16} h={14} stroke="#222">
          <path d="M5 4V2h10v7h-3M1 6h10v7H1z" />
          <path d="M5 2h10M1 7h10" strokeWidth="3" />
        </Icon>
      </QuickButton>
      <QuickButton $w={28} aria-label="Close"><Cross size={13} color="#222" /></QuickButton>
    </QuickAccess>
  </TitleBar>
);

const Tabs = () => (
  <TabBar>
    <FileTab>File</FileTab>
    <ActiveTab>Create</ActiveTab>
    <Tab>Insert</Tab>
    <Tab>View</Tab>
    <Tab>Manage</Tab>
    <Tab>Add-Ins</Tab>
    <Tab>Modify</Tab>
    <QuickButton $w={102} aria-label="Minimize ribbon">
      <Icon w={34} h={12} stroke="#444">
        <rect x="1" y="1" width="18" height="10" rx="3" fill="#eee" />
        <path d="M7 8h6l-3-4zM26 4h6l-3 4z" fill="#222" stroke="none" />
      </Icon>
    </QuickButton>
  </TabBar>
);

const PROPERTY_GROUPS = [
  { name: 'Structural', rows: [{ name: 'Section Shape', value: 'Not Defined', focused: true }] },
  { name: 'Identity Data', rows: [{ name: 'OmniClass Number', value: '' }, { name: 'OmniClass Title', value: '', muted: true }] },
  { name: 'Other', rows: [{ name: 'Rotate with component', check: true }, { name: 'Shared', check: true }] },
];

const PropertyRow = ({ row }) => {
  const id = row.name.toLowerCase().replace(/ /g, '-');
  return (
    <tr>
      <NameCell $muted={row.muted}><label htmlFor={id}>{row.name}</label></NameCell>
      <ValueCell $check={row.check}>
        {row.check
          ? <Check id={id} type="checkbox" />
          : <ValueInput id={id} type="text" defaultValue={row.value} $focused={row.focused} />}
      </ValueCell>
    </tr>
  );
};

const Properties = () => (
  <Palette>
    <PaletteHeader>
      <PaletteTitle>Properties</PaletteTitle>
      <PlainButton aria-label="Close properties"><Cross size={13} /></PlainButton>
    </PaletteHeader>
    <TypePreview>
      <Thumb>
        <Icon w={80} stroke="none">
          <path d="M3 3h20v46H3z" fill="#dedede" />
          <path d="m23 49 54-14v10l-20 4z" fill="#f6f6f6" />
          <text x="17" y="61" fontFamily="Roboto" fontSize="74" fontWeight="900" fill="url(#grayLogo)">R</text>
        </Icon>
      </Thumb>
      <Down w={9} color="#999" />
    </TypePreview>
    <TypeRow>
      <SelectWrap>
        <TypeSelect aria-label="Family" defaultValue="detail">
          <option value="detail">Family: Detail Items</option>
        </TypeSelect>
        <SelectMark><Chevron dir="down" weight={1.5} /></SelectMark>
      </SelectWrap>
      <EditType disabled>
        <Icon w={17} stroke="#9a9a9a" strokeWidth="1.200">
          <path d="M1 3l2-2h4v7H1zM9 3l2-2h4v5M1 9h6v7H2l-1-2zM9 7h7v9H9zM11 10h3M11 13h3" />
        </Icon>
        Edit Type
      </EditType>
    </TypeRow>
    <GridArea>
      <PropertyTable>
        {PROPERTY_GROUPS.map((group) => (
          <tbody key={group.name}>
            <tr>
              <GroupHead colSpan={2}>
                <GroupHeadInner>
                  {group.name}
                  <PlainButton aria-label={`Collapse ${group.name}`}>
                    <Icon w={8} h={16} stroke="#000"><path d="m1 4 3-3 3 3M1 8.500l3-3 3 3" /></Icon>
                  </PlainButton>
                </GroupHeadInner>
              </GroupHead>
            </tr>
            {group.rows.map((row) => <PropertyRow key={row.name} row={row} />)}
          </tbody>
        ))}
      </PropertyTable>
      <ScrollBar $pad={5}>
        <Chevron dir="up" />
        <ScrollTrack>
          <ScrollSpace $size={6} />
          <ScrollThumb $size={143} />
          <ScrollSpace $size={35} />
        </ScrollTrack>
        <Chevron dir="down" />
      </ScrollBar>
    </GridArea>
    <PaletteFooter>
      <HelpLink href="#help">Properties help</HelpLink>
      <ApplyButton disabled>Apply</ApplyButton>
    </PaletteFooter>
  </Palette>
);

const TreeIcons = {
  views: (
    <Icon w={19}>
      <path d="M1 5V1h4M14 1h4v4M18 14v4h-4M5 18H1v-4" />
      <path d="m5 7 3-2h6v6l-3 3H5z" fill="#e8e9ee" />
    </Icon>
  ),
  sheets: (
    <Icon w={19} h={17}>
      <path d="M1 1h13l4 4v11H1z" fill="#e6e7ec" />
      <path d="M3 5h8v8H8V9H3zM3 12h3M14 1v4h4M15 8v6" strokeWidth="1.200" />
    </Icon>
  ),
  families: (
    <Icon w={19}>
      <path d="M1 1h8v9H1zM12 1h6v17H1v-5h11z" fill="#e6e7ec" />
    </Icon>
  ),
  groups: (
    <Icon w={19}>
      <path d="M4 1H1v17h3M15 1h3v17h-3" />
      <path d="m4 5 4-2 5 1 2 5-1 6-5-1-5-4z" fill="#cfd2da" />
      <circle cx="8" cy="8" r="4" />
    </Icon>
  ),
  links: (
    <Icon w={19} h={9} stroke="#c98a10" strokeWidth="2.500">
      <rect x="1.500" y="1.500" width="8" height="6" rx="3" fill="#ffe08a" />
      <rect x="10" y="1.500" width="8" height="6" rx="3" fill="#ffe08a" />
      <path d="M6 4.500h7" />
    </Icon>
  ),
};

const TreeToggle = ({ open }) => (
  <Expander aria-label={open ? 'Collapse' : 'Expand'}>
    <Icon w={9} stroke="#2a4a9c" strokeWidth="1"><path d={open ? 'M0 4.500h9' : 'M0 4.500h9M4.500 0v9'} /></Icon>
  </Expander>
);

const ProjectBrowser = () => (
  <Browser>
    <PaletteHeader>
      <PaletteTitle>Project Browser - Family2.rfa</PaletteTitle>
      <PlainButton aria-label="Close project browser"><Cross size={13} /></PlainButton>
    </PaletteHeader>
    <Tree>
      <TreeRow $indent={0}><TreeToggle open /><Connector $w={9} />{TreeIcons.views}<TreeLabel $selected>Views (all)</TreeLabel></TreeRow>
      <TreeRow $indent={26}><TreeToggle open /><Connector $w={12} /><TreeLabel $near>Floor Plans</TreeLabel></TreeRow>
      <TreeRow $indent={58}><CornerConnector /><TreeLabel $near $bold>Ref. Level</TreeLabel></TreeRow>
      <TreeRow $indent={7}><Connector $w={15} />{TreeIcons.sheets}<TreeLabel>Sheets (all)</TreeLabel></TreeRow>
      <TreeRow $indent={0}><TreeToggle /><Connector $w={9} />{TreeIcons.families}<TreeLabel>Families</TreeLabel></TreeRow>
      <TreeRow $indent={0}><TreeToggle /><Connector $w={9} />{TreeIcons.groups}<TreeLabel>Groups</TreeLabel></TreeRow>
      <TreeRow $indent={7}><Connector $w={15} />{TreeIcons.links}<TreeLabel>Revit Links</TreeLabel></TreeRow>
    </Tree>
  </Browser>
);

/* concrete hatch, in thirds of a pixel from the corner of the region */

const TICK_SHAPES = {
  fall: 'm-5-4 10 9',
  rise: 'm-5 4 9-8',
  flat: 'm-6 0h12',
  lift: 'm-7 2h5l8-3',
};

const TICKS = {
  fall: [
    [571, 40], [329, 82], [88, 124], [92, 166], [313, 175], [430, 175], [187, 214], [180, 222], [400, 231], [533, 184], [1153, 48],
    [913, 91], [755, 193], [671, 132], [978, 205], [1070, 237], [1065, 259], [829, 277], [587, 319], [347, 361], [230, 385], [104, 401],
    [453, 396], [673, 405], [1115, 424], [1054, 484], [812, 524], [569, 566], [592, 616], [149, 598], [371, 607], [237, 652], [812, 625],
    [911, 616], [1153, 574], [1034, 634], [671, 658], [678, 671], [1121, 691], [428, 699], [90, 650], [844, 251], [330, 607],
    [185, 739], [68, 808], [289, 817], [510, 826], [586, 844], [345, 884], [829, 802], [1069, 760], [731, 836], [952, 845], [208, 1028],
    [429, 1039], [75, 1075], [650, 1048], [811, 1049], [872, 1057], [1052, 1007], [1153, 1099], [516, 1093], [568, 1089], [737, 1102],
    [958, 1112], [910, 1141], [86, 1174], [427, 1222], [669, 1182], [126, 1240], [184, 1264], [348, 1250], [568, 1257], [788, 1267],
    [1010, 1276], [1069, 1285], [827, 1327], [586, 1369], [343, 1408], [1172, 855], [1092, 1066],
  ],
  rise: [
    [483, 49], [272, 77], [55, 109], [478, 187], [265, 216], [51, 247], [688, 160], [903, 129], [1116, 100], [473, 324], [261, 353],
    [45, 385], [683, 298], [898, 266], [1110, 238], [678, 436], [890, 406], [1103, 377], [256, 490], [467, 462], [41, 523], [672, 574],
    [888, 543], [1101, 513], [250, 629], [667, 712], [1095, 652], [886, 682], [37, 658], [457, 739], [245, 767], [663, 850],
    [877, 819], [1090, 789], [451, 877], [241, 904], [657, 988], [872, 956], [1084, 928], [448, 1014], [236, 1043], [653, 1125],
    [868, 1093], [442, 1153], [231, 1180], [862, 1233], [1075, 1202], [646, 1265], [438, 1290], [226, 1318], [858, 1369], [1069, 1342],
    [642, 1402], [1081, 1067],
  ],
  flat: [
    [951, 34], [792, 112], [270, 181], [426, 160], [579, 289], [57, 358], [732, 418], [991, 385], [574, 439], [209, 487], [53, 508],
    [1144, 513], [882, 547], [361, 616], [1034, 676], [879, 697], [513, 745], [355, 766], [666, 874], [144, 943], [817, 1003],
    [295, 1073], [296, 1084], [138, 1093], [969, 1132], [448, 1201], [1121, 1261], [964, 1282], [600, 1330], [442, 1351], [77, 1399],
    [898, 413], [470, 454], [96, 653], [458, 662], [38, 1105],
  ],
  lift: [
    [166, 195], [948, 94], [688, 127], [317, 324], [160, 345], [682, 277], [839, 255], [1097, 371], [621, 583], [987, 535],
    [1101, 222], [901, 680], [252, 779], [403, 910], [769, 861], [926, 840], [248, 929], [1078, 969], [557, 1038], [1073, 1119],
    [708, 1167], [550, 1188], [186, 1235], [861, 1296], [339, 1364],
  ],
};

const STONE_SHAPES = {
  large: 'm-32 34 32-34 6 38-36-2z',
  small: 'm-12 7 17-21 7 25-20 0z',
  tilted: 'm-14-2 28-8-6 22-8-3z',
};

const STONES = {
  large: [[878, 85], [490, 490], [934, 556], [104, 892], [546, 960], [988, 1029], [158, 1362]],
  small: [
    [118, 258], [413, 284], [712, 310], [1010, 336], [175, 570], [473, 596], [769, 622], [1067, 648], [232, 882], [530, 906],
    [827, 933], [1124, 959], [290, 1193], [587, 1218], [884, 1244],
  ],
  tilted: [
    [369, 76], [963, 109], [617, 241], [267, 376], [864, 409], [514, 542], [1111, 575], [168, 677], [765, 710], [415, 843],
    [1010, 876], [66, 976], [661, 1010], [314, 1143], [909, 1176], [561, 1310], [1156, 1343],
  ],
};

const toPath = (shapes, points) => Object.keys(points)
  .map((kind) => points[kind].map(([x, y]) => `M${x} ${y}${shapes[kind]}`).join(''))
  .join('');

const REFERENCE_DASH = '18 17 18 17 18 18';

const Drawing = () => (
  <svg aria-label="Floor plan">
    <g transform="translate(-391 -243)" fill="none" shapeRendering="crispEdges">
      <g transform="translate(815 435) scale(0.33333)" stroke="#000" strokeWidth="3">
        <path d={toPath(TICK_SHAPES, TICKS)} />
        <path d={toPath(STONE_SHAPES, STONES)} />
        <path d="M413 33 402 48l38 6V33M37 430l10-10 5 38H37M945 34h18M1176 1268l-6 8h6" />
      </g>
      <path d="M967.500 261V973" stroke="#008000" strokeDasharray={REFERENCE_DASH} />
      <path d="M393 636.500h3M414 636.500h1466" stroke="#008000" strokeDasharray={REFERENCE_DASH} />
      <path d="M826.500 445.500h381v462h-381z" stroke="#000" />
    </g>
  </svg>
);

const ViewIcon = ({ muted }) => (
  <Icon w={20} h={18} stroke={muted ? '#8a8d95' : INK}>
    <path d="M1 1h9v4h9v12H7v-3H1z" fill={muted ? '#d8d8da' : '#f2f2f5'} />
    <path d="M10 1h4v4M10 5v5H7v4M13 10h6M13 8v3" strokeWidth="1.200" />
  </Icon>
);

const Crop = ({ children }) => (
  <Icon w={20} h={16}>
    <path d="M4 0v14M0 11h16M4 3h13v10M12 3v10" strokeWidth="1.200" />
    <path d="M5 12V4h10v4h-5v4z" fill="#2f85cc" stroke="#1b5f9c" />
    {children}
  </Icon>
);

const Cubed = () => <path d="M1 5h11v9H1zM1 5l5-4h12v9l-6 4M12 5l6-4M6 1v9L1 14M6 10h12" strokeWidth="1.200" />;

const VIEW_TOOLS = [
  ['Detail level', <Icon w={20} h={16}><path d="M1 1h18v14H1z" fill="url(#steel)" /></Icon>],
  ['Visual style', <Icon w={20} h={16}><Cubed /></Icon>],
  ['Crop view', <Crop><path d="m11 7 8 8M19 7l-8 8" stroke="#c72c24" strokeWidth="3" /></Crop>],
  ['Show crop region', <Crop><circle cx="16" cy="6" r="3.500" fill="#e4f1fd" stroke="#5a9bd8" /><path d="M15 10h3v4h-3z" fill="#fff" strokeWidth="1" /></Crop>],
  ['Temporary hide', <Icon w={20} h={16}><path d="m0 3 3-1 3 6M9 10c3-1 2-3 5-2M15 1l3 1 1 5" /><circle cx="8" cy="11" r="3" fill="#eef" /><circle cx="16" cy="9" r="3" fill="#eef" /></Icon>],
  ['Reveal constraints', <Icon w={20} h={16}><path d="M1 0v15M19 0v6M2 3h16M1 14h11" strokeDasharray="3 1" /><path d="M12 9h8v6h-8z" fill={INK} /><path d="M14 9V6h4v3" /></Icon>],
  ['Preview visibility', <Icon w={20} h={16}><path d="M1 1h14v8H1zM0 12h14M0 15h18" fill="#e6e7ec" /><circle cx="16" cy="5" r="3.500" fill="#e4f1fd" stroke="#5a9bd8" /><path d="M15 9h3v4h-3z" fill="#fff" strokeWidth="1" /></Icon>],
];

const StatusGlyph = ({ children, pointer = true }) => (
  <Icon w={22} h={22}>
    {children}
    {pointer && <Pointer x={9} y={6} scale={0.6} />}
  </Icon>
);

const STATUS_TOOLS = [
  ['Select links', (
    <StatusGlyph>
      <rect x="2" y="3" width="9" height="6" rx="3" stroke="#dba613" strokeWidth="2.500" />
      <rect x="12" y="3" width="8" height="6" rx="3" stroke="#dba613" strokeWidth="2.500" />
      <path d="M7 6h8" stroke="#f5cf3c" strokeWidth="2.500" />
    </StatusGlyph>
  )],
  ['Select underlay', <StatusGlyph><path d="m3 9 6-7h11l-5 7zM2 17l4-5h13l-4 5z" fill="#d6eaf7" stroke="#1b6cb0" /></StatusGlyph>],
  ['Select pinned', <StatusGlyph><path d="M3 2h10v3H3zM5 5h6v5H5zM2 10h12v3H2z" fill="#ee7a35" stroke="#a94812" /><path d="M8 14v6" /></StatusGlyph>],
  ['Select by face', <StatusGlyph><path d="m3 5 10-4v16L3 19z" fill="#8fcbea" stroke="#1b6cb0" /></StatusGlyph>],
  ['Drag on selection', <StatusGlyph><path d="M0 7h12M6 1v12M2 5 0 7l2 2M4 3l2-2 2 2" stroke="#000" /><path d="m12 2 8 8M20 2l-8 8" stroke="#cc1f1f" strokeWidth="3" /></StatusGlyph>],
  ['Background processes', <StatusGlyph pointer={false}><circle cx="11" cy="11" r="7" stroke="#a2a2a2" strokeWidth="4" strokeDasharray="4 1.500" /></StatusGlyph>],
];

const View = () => (
  <ViewArea>
    <ViewTabs>
      <ViewTab><ViewIcon muted />Level 1</ViewTab>
      <ViewTab $active>
        <ViewIcon />
        Ref. Level
        <PlainButton aria-label="Close view"><Cross /></PlainButton>
      </ViewTab>
      <TabMenu aria-label="View list">{QuickIcons.customize}</TabMenu>
    </ViewTabs>
    <CanvasRow>
      <Canvas>
        <Drawing />
        <NavBar>
          <NavEdge aria-label="Close navigation bar">
            <Icon w={8} stroke="none">
              <circle cx="4" cy="4" r="4" fill="#b8b8b8" />
              <path d="m2.500 2.500 3 3M5.500 2.500l-3 3" stroke="#fff" strokeWidth="1" />
            </Icon>
          </NavEdge>
          <NavTool aria-label="Steering wheel">
            <Icon w={24} h={24} stroke="#999" strokeWidth="1.200">
              <path d="M11 1h8v9a9 9 0 1 1-8-9z" fill="#eee" />
              <circle cx="10" cy="10" r="4.500" />
              <text x="12" y="23" fontFamily="Open Sans" fontSize="9" fontWeight="700" fill="#5f9ac9" stroke="none">2D</text>
            </Icon>
            <Down w={5} color="#999" />
          </NavTool>
          <NavLine />
          <NavTool aria-label="Zoom region">
            <Icon w={18} h={17} stroke="#8abb7c">
              <path d="M2 1h11v11H2z" fill="#b9d6a5" />
              <circle cx="12" cy="11" r="3.500" fill="#eee" stroke="#999" />
              <path d="m15 14 3 3" stroke="#999" />
            </Icon>
            <Down w={5} color="#999" />
          </NavTool>
          <NavEdge aria-label="Navigation options">
            <Icon w={8} stroke="none">
              <circle cx="4" cy="4" r="4" fill="#b8b8b8" />
              <path d="M2 3.500h4" stroke="#fff" strokeWidth="1" />
            </Icon>
          </NavEdge>
        </NavBar>
      </Canvas>
      <ScrollBar $pad={7}>
        <Chevron dir="up" />
        <ScrollTrack>
          <ScrollSpace $size={339} />
          <ScrollThumb $size={21} />
          <ScrollSpace $size={337} />
        </ScrollTrack>
        <Chevron dir="down" />
      </ScrollBar>
    </CanvasRow>
    <ViewBar>
      <ScaleButton>1 : 10</ScaleButton>
      {VIEW_TOOLS.map(([name, glyph], i) => (
        <ViewTool key={name} aria-label={name} $gap={i % 2}>{glyph}</ViewTool>
      ))}
      <ViewTool aria-label="Scroll left"><Chevron dir="left" /></ViewTool>
      <HTrack>
        <ScrollSpace $size={591} />
        <ScrollThumb $size={20} />
        <ScrollSpace $size={594} />
      </HTrack>
      <Chevron dir="right" />
      <Grip>
        <Icon w={12} stroke="none">
          <path d="M9 1h3v2H9zM5 5h3v2H5zM9 5h3v2H9zM1 9h3v2H1zM5 9h3v2H5zM9 9h3v2H9z" fill="#b5b5b5" />
        </Icon>
      </Grip>
    </ViewBar>
  </ViewArea>
);

const App = () => {
  return (
    <>
      <GlobalStyle />
      <SharedDefs />
      <Window>
        <Header />
        <Tabs />
        <Ribbon />
        <OptionsBar />
        <Workspace>
          <Sidebar>
            <Properties />
            <ProjectBrowser />
          </Sidebar>
          <View />
        </Workspace>
        <StatusBar>
          <span>Click to select, TAB for alternates, CTRL adds, SHIFT unselects.</span>
          <StatusTools>
            {STATUS_TOOLS.map(([name, glyph]) => (
              <StatusTool key={name} aria-label={name}>{glyph}</StatusTool>
            ))}
            <PlainButton>
              <Icon w={22} h={20} stroke="#4b5058">
                <path d="M1 1h20v3l-7 7v8h-5v-8L1 4z" fill="#c9ccd2" />
              </Icon>
              :0
            </PlainButton>
          </StatusTools>
        </StatusBar>
        <TaskBar>
          <TaskSearch>
            <TaskDot $color="#b9dcec" />
            <TaskDot $color="#19a89b" />
          </TaskSearch>
          <TaskActive />
        </TaskBar>
        <Markup width="48" height="84" fill="none" stroke="#f0100c" strokeWidth="2.5" strokeLinecap="round" strokeLinejoin="round">
          <path d="M41 81C35 62 28 47 21 38 14 26 11 18 10 11M3 14c3 0 3-3 4-6 2-6 6-7 9 0l8 12" />
        </Markup>
      </Window>
    </>
  );
};

export default App;
